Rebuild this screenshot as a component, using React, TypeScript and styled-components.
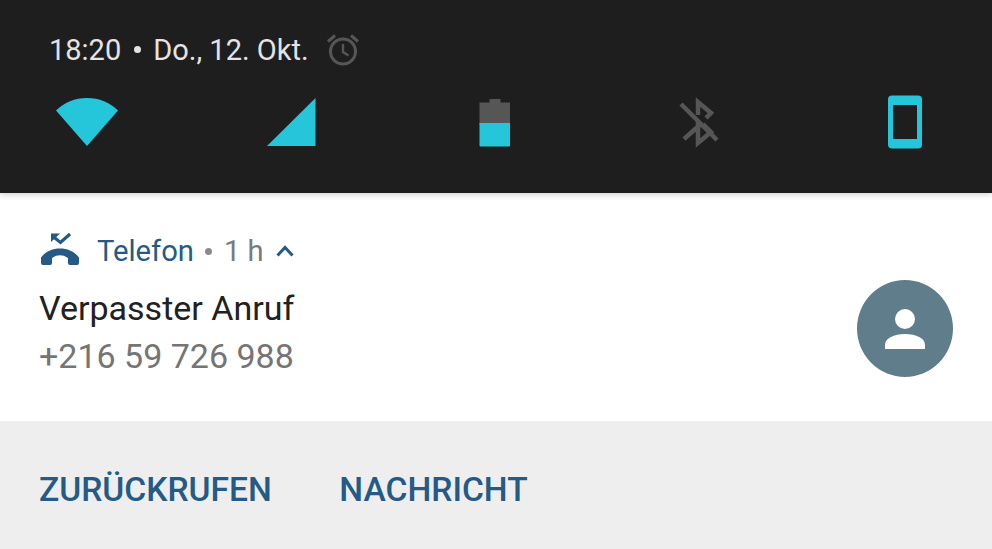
import React from "react";
import styled, { createGlobalStyle } from "styled-components";

const Global = createGlobalStyle`
  html, body { margin: 0; padding: 0; background: #fff; }
  body { font-family: Roboto, "Liberation Sans", sans-serif; width: 992px; height: 549px; overflow: hidden; }
`;

const Page = styled.div`
  width: 992px;
  height: 549px;
  display: flex;
  flex-direction: column;
  overflow: hidden;
`;

const QuickBar = styled.header`
  position: relative;
  z-index: 1;
  height: 193px;
  box-sizing: border-box;
  background: #1e1e1e;
  box-shadow: 0 1px 6px rgba(0, 0, 0, 0.22);
  padding: 30px 57px 0 49px;
`;

const StatusLine = styled.div`
  display: flex;
  align-items: center;
  height: 40px;
  color: #e4e4e4;
  font-size: 29px;
  line-height: 40px;
  gap: 11.500px;
`;

const StatusDot = styled.span`
  width: 7px;
  height: 7px;
  border-radius: 50%;
  background: #e4e4e4;
  margin: 0 1px 2px;
`;

const AlarmIcon = styled.svg`
  width: 34px;
  height: 34px;
  margin-left: 6px;
  flex: none;
`;

const TileRow = styled.div`
  display: flex;
  justify-content: space-between;
  margin: 25px 0 0 6px;
`;

const Tile = styled.svg`
  width: 64px;
  height: 54px;
  display: block;
`;

const Notification = styled.section`
  height: 228px;
  box-sizing: border-box;
  background: #fff;
  padding: 37px 39px 0;
  display: flex;
  justify-content: space-between;
`;

const NotificationBody = styled.div`
  display: flex;
  flex-direction: column;
`;

const AppLine = styled.div`
  display: flex;
  align-items: center;
  height: 42px;
  font-size: 29.200px;
  line-height: 42px;
`;

const AppIcon = styled.svg`
  width: 41px;
  height: 36px;
  margin-right: 17px;
  flex: none;
  align-self: flex-start;
`;

const AppName = styled.span`
  color: #245a85;
`;

const Meta = styled.span`
  color: #7a7a7a;
  margin-left: 11px;
  display: flex;
  align-items: center;
`;

const MetaDot = styled.span`
  width: 7px;
  height: 7px;
  border-radius: 50%;
  background: #8a8a8a;
  margin-right: 12px;
`;

const Chevron = styled.svg`
  width: 20px;
  height: 14px;
  margin-left: 11px;
  flex: none;
`;

const Title = styled.div`
  color: #212121;
  font-size: 34px;
  line-height: 48px;
  margin-top: 12px;
`;

const Subtitle = styled.div`
  color: #757575;
  font-size: 34px;
  line-height: 48px;
`;

const Avatar = styled.div`
  width: 96px;
  height: 97px;
  border-radius: 50%;
  background: #607d8b;
  margin: 50px 0 0;
  display: flex;
  align-items: center;
  justify-content: center;
`;

const AvatarGlyph = styled.svg`
  width: 40px;
  height: 40px;
`;

const ActionBar = styled.footer`
  flex: 1;
  background: #eeeeee;
  display: flex;
  align-items: center;
  gap: 67.500px;
  padding: 10px 39px 0;
`;

const ActionButton = styled.span`
  color: #245a85;
  font-size: 33.600px;
  font-weight: 500;
  line-height: 48px;
`;

const CYAN = "#26c6da";
const DIM = "#565656";

export default function App() {
  return (
    <Page>
      <Global />
      <QuickBar>
        <StatusLine>
          <span>18:20</span>
          <StatusDot />
          <span>Do., 12. Okt.</span>
          <AlarmIcon viewBox="0 0 34 34" fill="none" stroke={DIM}>
            <circle cx="17" cy="18.500" r="12.500" strokeWidth="3" />
            <path d="M17 11v8l5.500 3.500" strokeWidth="2.400" />
            <path d="M2 8.500 9 2.500M32 8.500 25 2.500" strokeWidth="3" />
          </AlarmIcon>
        </StatusLine>
        <TileRow>
          {/* Wi-Fi wedge */}
          <Tile viewBox="0 0 64 54">
            <path d="M1 15.500C9 7.500 20 3 32 3s23 4.500 31 12.500L32 51Z" fill={CYAN} />
          </Tile>
          {/* Mobile signal */}
          <Tile viewBox="0 0 64 54">
            <path d="M8 51 56.500 3v48Z" fill={CYAN} />
          </Tile>
          {/* Battery, half charged */}
          <Tile viewBox="0 0 64 54">
            <path d="M16.500 7.500h10V4h11v3.500H47V30H16.500Z" fill={DIM} />
            <path d="M16.500 28H47v22.500a1 1 0 0 1-1 1H17.500a1 1 0 0 1-1-1Z" fill={CYAN} />
          </Tile>
          {/* Bluetooth disabled */}
          <Tile viewBox="0 0 64 54">
            <path
              d="M31 20V7L44 18 39 23M14 9 50 45M31 26V48L44 37 36 29M17 44 35 28"
              fill="none"
              stroke={DIM}
              strokeWidth="4.500"
            />
          </Tile>
          {/* Rotation lock phone */}
          <Tile viewBox="0 0 64 54">
            <rect x="17" y="0.500" width="34" height="53" rx="4" fill={CYAN} />
            <rect x="22" y="10" width="24" height="34" fill="#1e1e1e" />
          </Tile>
        </TileRow>
      </QuickBar>
      <Notification>
        <NotificationBody>
          <AppLine>
            <AppIcon viewBox="0 0 41 36" aria-hidden="true">
              <path
                d="M2 27.500C6.500 21.500 13 18.500 21 18.500s14.500 3 19 9V33a2 2 0 0 1-2 2h-7a2 2 0 0 1-2-2v-5C26 26 23.500 25.300 21 25.300S16 26 13 28v5a2 2 0 0 1-2 2H4a2 2 0 0 1-2-2Z"
                fill="#245a85"
              />
              <path d="M14 6.500 21.500 12.500 31 4" fill="none" stroke="#245a85" strokeWidth="3.200" />
              <path d="M12 3.500h9L12 12Z" fill="#245a85" />
            </AppIcon>
            <AppName>Telefon</AppName>
            <Meta>
              <MetaDot />1 h
            </Meta>
            <Chevron viewBox="0 0 20 14" fill="none" stroke="#245a85" strokeWidth="3">
              <path d="M2.500 11.500 10 3.500l7.500 8" />
            </Chevron>
          </AppLine>
          <Title>Verpasster Anruf</Title>
          <Subtitle>+216 59 726 988</Subtitle>
        </NotificationBody>
        <Avatar>
          <AvatarGlyph viewBox="0 0 40 40" fill="#fff">
            <circle cx="20" cy="10" r="10" />
            <path d="M0 40v-4C0 29 9 25 20 25s20 4 20 11v4Z" />
          </AvatarGlyph>
        </Avatar>
      </Notification>
      <ActionBar>
        <ActionButton>ZURÜCKRUFEN</ActionButton>
        <ActionButton>NACHRICHT</ActionButton>
      </ActionBar>
    </Page>
  );
}
